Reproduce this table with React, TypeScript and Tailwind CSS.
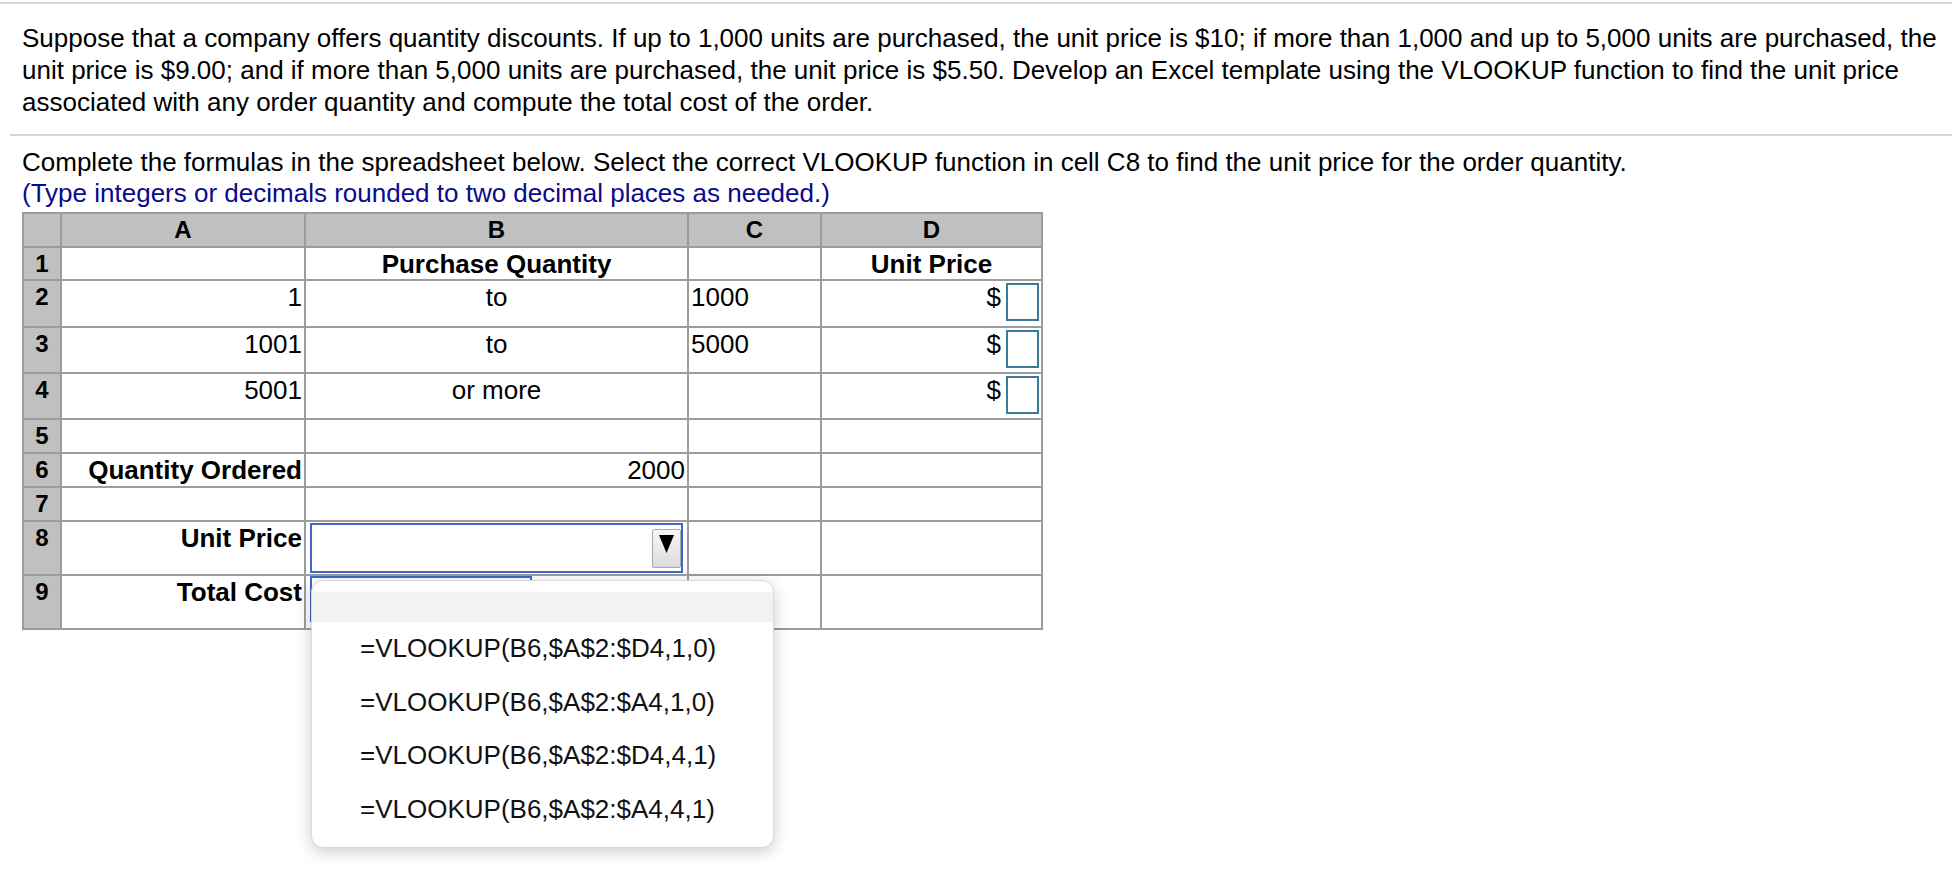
import { ReactNode } from "react";

const line = "border-r-2 border-b-2 border-[#9c9c9c]";

const Head = ({ children }: { children?: ReactNode }) => (
  <div className={`${line} bg-[#c0c0c0] text-center text-[24px] font-bold leading-[32px]`}>{children}</div>
);

const Cell = ({ children, className = "" }: { children?: ReactNode; className?: string }) => (
  <div className={`${line} bg-white px-[2px] text-[26px] leading-[32px] ${className}`}>{children}</div>
);

const PriceBox = () => (
  <div className="flex justify-end gap-[5px]">
    <span>$</span>
    <div className="mt-[2px] h-[38px] w-[33px] border-2 border-[#3b7a9b] bg-white" />
  </div>
);

const options = [
  "=VLOOKUP(B6,$A$2:$D4,1,0)",
  "=VLOOKUP(B6,$A$2:$A4,1,0)",
  "=VLOOKUP(B6,$A$2:$D4,4,1)",
  "=VLOOKUP(B6,$A$2:$A4,4,1)",
];

const Sheet = () => (
  <div className="ml-[22px] mt-[3px] grid w-fit grid-cols-[38px_244px_383px_133px_221px] grid-rows-[34px_33px_47px_46px_46px_34px_34px_34px_54px_54px] border-l-2 border-t-2 border-[#9c9c9c]">
    {/* column letters */}
    <Head />
    <Head>A</Head>
    <Head>B</Head>
    <Head>C</Head>
    <Head>D</Head>

    <Head>1</Head>
    <Cell />
    <Cell className="text-center font-bold">Purchase Quantity</Cell>
    <Cell />
    <Cell className="text-center font-bold">Unit Price</Cell>

    <Head>2</Head>
    <Cell className="text-right">1</Cell>
    <Cell className="text-center">to</Cell>
    <Cell>1000</Cell>
    <Cell><PriceBox /></Cell>

    <Head>3</Head>
    <Cell className="text-right">1001</Cell>
    <Cell className="text-center">to</Cell>
    <Cell>5000</Cell>
    <Cell><PriceBox /></Cell>

    <Head>4</Head>
    <Cell className="text-right">5001</Cell>
    <Cell className="text-center">or more</Cell>
    <Cell />
    <Cell><PriceBox /></Cell>

    <Head>5</Head>
    <Cell />
    <Cell />
    <Cell />
    <Cell />

    <Head>6</Head>
    <Cell className="text-right font-bold">Quantity Ordered</Cell>
    <Cell className="text-right">2000</Cell>
    <Cell />
    <Cell />

    <Head>7</Head>
    <Cell />
    <Cell />
    <Cell />
    <Cell />

    <Head>8</Head>
    <Cell className="text-right font-bold">Unit Price</Cell>
    <Cell className="pl-[4px] pr-[4px] pt-px">
      {/* open select */}
      <div className="flex h-[50px] items-start justify-end border-2 border-[#3d66c9] bg-white pt-[4px]">
        <div className="flex h-[39px] w-[29px] items-start justify-center rounded-[2px] border border-[#a8a8a8] bg-gradient-to-b from-[#f7f7f7] to-[#dcdcdc] pt-[5px]">
          <svg width="15" height="18" viewBox="0 0 15 18">
            <polygon points="0,0 15,0 7.5,18" fill="#000" />
          </svg>
        </div>
      </div>
    </Cell>
    <Cell />
    <Cell />

    <Head>9</Head>
    <Cell className="text-right font-bold">Total Cost</Cell>
    <Cell className="pl-[4px]">
      <div className="h-[46px] w-[222px] border-2 border-[#3d66c9] bg-white" />
    </Cell>
    <Cell />
    <Cell />
  </div>
);

const Popup = () => (
  <div className="absolute left-[311px] top-[578px] w-[463px] rounded-[12px] border border-[#d9d9d9] bg-white py-[11px] shadow-[0_4px_16px_rgba(0,0,0,0.2)]">
    <div className="h-[30px] bg-[#f2f2f2]" />
    {options.map((o) => (
      <div key={o} className="flex h-[53.5px] items-center pl-[48px] text-[26px] text-[#111]">
        {o}
      </div>
    ))}
  </div>
);

export default function App() {
  return (
    <div className="relative min-h-screen bg-white font-['Liberation_Sans',Arial,sans-serif] text-black">
      <div className="mt-[2px] h-[2px] bg-[#cfd4de]" />
      <p className="ml-[22px] mr-[10px] mt-[18px] text-[26px] leading-[32px]">
        Suppose that a company offers quantity discounts. If up to 1,000 units are purchased, the unit price is $10; if more than 1,000 and up to 5,000 units are purchased, the unit price is $9.00; and if more than 5,000 units are purchased, the unit price is $5.50. Develop an Excel template using the VLOOKUP function to find the unit price associated with any order quantity and compute the total cost of the order.
      </p>
      <div className="ml-[10px] mt-[16px] h-[2px] bg-[#cfd4de]" />
      <div className="ml-[22px] mt-[11px] text-[26px] leading-[31px]">
        <p>
          Complete the formulas in the spreadsheet below. Select the correct VLOOKUP function in cell C8 to find the unit price for the order quantity.
        </p>
        <p className="text-[#0a0a8c]">(Type integers or decimals rounded to two decimal places as needed.)</p>
      </div>
      <Sheet />
      <Popup />
    </div>
  );
}
